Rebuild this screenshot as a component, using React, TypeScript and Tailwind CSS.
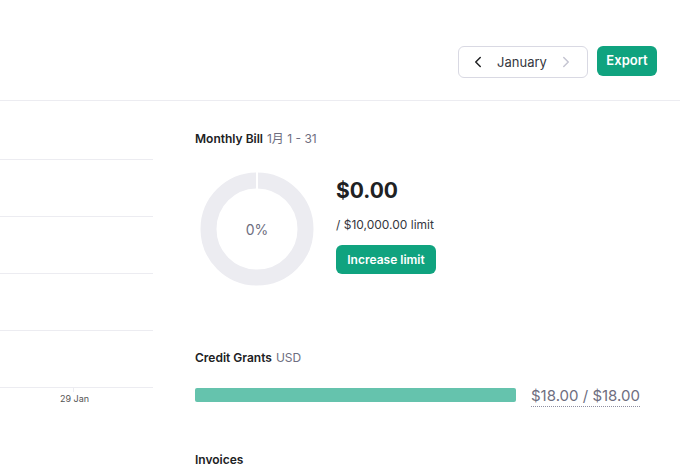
import { ChevronLeft, ChevronRight } from "lucide-react";

const font = { fontFamily: "Inter, 'Noto Sans CJK SC', sans-serif" };

function UsageChart() {
  return (
    <div className="relative w-[153px] shrink-0 pt-[58px]">
      <div className="h-[57px] border-t border-[#ececf1]" />
      <div className="h-[57px] border-t border-[#ececf1]" />
      <div className="h-[57px] border-t border-[#ececf1]" />
      <div className="h-[57px] border-t border-[#ececf1]" />
      <div className="relative h-[20px] border-t border-[#ececf1]">
        <div className="absolute left-[73px] top-0 h-[4px] w-px bg-[#ececf1]" />
        <div className="absolute left-[60px] top-[4px] text-[9px] text-[#555]">29 Jan</div>
      </div>
    </div>
  );
}

function Donut() {
  const r = 48.5;
  return (
    <div className="relative ml-[5px] h-[114px] w-[114px] shrink-0">
      <svg width="114" height="114" viewBox="0 0 114 114">
        <circle cx="57" cy="57" r={r} fill="none" stroke="#ececf1" strokeWidth="16" />
        <rect x="56" y="0" width="2" height="18" fill="#fff" />
      </svg>
      <div className="absolute inset-0 flex items-center justify-center text-[14px] text-[#6e6e80]">
        0%
      </div>
    </div>
  );
}

export default function App() {
  return (
    <div className="h-[467px] w-[680px] overflow-hidden bg-white text-[#202123]" style={font}>
      <header className="flex h-[101px] items-start justify-end gap-[9px] border-b border-[#ececf1] pr-[23px] pt-[46px]">
        <div className="flex h-[32px] w-[130px] items-center justify-between rounded-md border border-[#d9d9e3] pl-[10px] pr-[12px]">
          <ChevronLeft className="h-[18px] w-[18px] text-[#202123]" strokeWidth={2} />
          <span className="mt-[2px] text-[13px] text-[#353740]">January</span>
          <ChevronRight className="h-[18px] w-[18px] text-[#c5c5d2]" strokeWidth={2} />
        </div>
        <button className="flex h-[30px] w-[60px] items-center justify-center rounded-md bg-[#10a37f] text-[13px] font-semibold text-white">
          Export
        </button>
      </header>

      <div className="flex gap-[42px]">
        <UsageChart />

        <div className="w-[460px] pt-[30px]">
          <div className="flex items-baseline gap-[4px] text-[12px] leading-4">
            <span className="font-semibold text-[#202123]">Monthly Bill</span>
            <span className="text-[#6e6e80]">1月 1 - 31</span>
          </div>

          <div className="mt-[25px] flex gap-[22px]">
            <Donut />
            <div className="flex flex-col items-start pt-[7px]">
              <div className="text-[21px] font-bold leading-6 text-[#202123]">$0.00</div>
              <div className="mt-[14px] text-[12px] leading-4 text-[#353740]">/ $10,000.00 limit</div>
              <button className="mt-[12px] flex h-[29px] w-[100px] items-center justify-center rounded-md bg-[#10a37f] text-[12px] font-semibold text-white">
                Increase limit
              </button>
            </div>
          </div>

          <div className="mt-[64px] flex items-baseline gap-[4px] text-[12px] leading-4">
            <span className="font-semibold text-[#202123]">Credit Grants</span>
            <span className="text-[#6e6e80]">USD</span>
          </div>

          <div className="mt-[16px] flex items-center gap-[15px]">
            <div className="h-[14px] w-[321px] rounded-[2px] bg-[#65c3ad]" />
            <span className="mt-[4px] border-b border-dotted border-[#8e8ea0] text-[15px] leading-5 text-[#6e6e80]">
              $18.00 / $18.00
            </span>
          </div>

          <div className="mt-[45px] text-[12px] font-semibold leading-4 text-[#202123]">Invoices</div>
        </div>
      </div>
    </div>
  );
}
